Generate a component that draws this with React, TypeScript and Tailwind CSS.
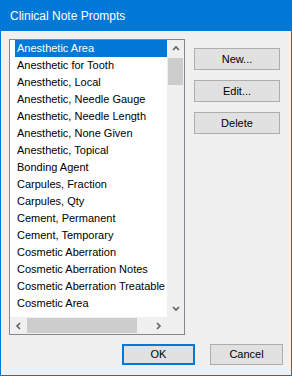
const items = [
  "Anesthetic Area",
  "Anesthetic for Tooth",
  "Anesthetic, Local",
  "Anesthetic, Needle Gauge",
  "Anesthetic, Needle Length",
  "Anesthetic, None Given",
  "Anesthetic, Topical",
  "Bonding Agent",
  "Carpules, Fraction",
  "Carpules, Qty",
  "Cement, Permanent",
  "Cement, Temporary",
  "Cosmetic Aberration",
  "Cosmetic Aberration Notes",
  "Cosmetic Aberration Treatable",
  "Cosmetic Area",
];

const Chevron = ({ dir }: { dir: "up" | "down" | "left" | "right" }) => {
  const pts = {
    up: "1,5 4,2 7,5",
    down: "1,2 4,5 7,2",
    left: "5,1 2,4 5,7",
    right: "2,1 5,4 2,7",
  }[dir];
  return (
    <svg width="8" height="8" viewBox="0 0 8 8">
      <polyline points={pts} fill="none" stroke="#606060" strokeWidth="1.6" />
    </svg>
  );
};

const Btn = ({ label, wide, primary }: { label: string; wide?: boolean; primary?: boolean }) => (
  <button
    className={
      (wide ? "w-[86px] h-[22px] " : "w-[73px] h-[21px] ") +
      (primary ? "border-2 border-[#0078d7] " : "border border-[#adadad] ") +
      "bg-[#e1e1e1] text-[11px] text-black leading-none flex items-center justify-center"
    }
  >
    {label}
  </button>
);

export default function App() {
  return (
    <div
      className="w-[292px] h-[376px] bg-[#0078d7] flex flex-col"
      style={{ fontFamily: "'Liberation Sans', Arial, sans-serif" }}
    >
      <div className="h-[31px] flex items-center pl-[10px] text-white text-[12px]">
        Clinical Note Prompts
      </div>
      <div className="flex-1 bg-[#f0f0f0] mx-[1px] mb-[1px] flex flex-col">
        <div className="flex pl-2 pt-2">
          <div className="w-[176px] h-[296px] border border-[#828790] bg-white flex flex-col">
            <div className="flex flex-1 min-h-0">
              <div className="flex-1 pl-[5px] overflow-hidden">
                {items.map((it, i) => (
                  <div
                    key={it}
                    className={
                      "h-[17px] flex items-center pl-[2px] text-[11px] whitespace-nowrap " +
                      (i === 0 ? "bg-[#0078d7] text-white" : "text-black")
                    }
                  >
                    {it}
                  </div>
                ))}
              </div>
              <div className="w-[17px] bg-[#f0f0f0] flex flex-col">
                <div className="h-[17px] flex items-center justify-center">
                  <Chevron dir="up" />
                </div>
                <div className="flex-1">
                  <div className="mt-[1px] mx-[1px] h-[27px] bg-[#cdcdcd]" />
                </div>
                <div className="h-[17px] flex items-center justify-center">
                  <Chevron dir="down" />
                </div>
              </div>
            </div>
            <div className="h-[17px] flex">
              <div className="flex-1 bg-[#f0f0f0] flex items-center">
                <div className="w-[17px] h-[17px] flex items-center justify-center">
                  <Chevron dir="left" />
                </div>
                <div className="flex-1 h-full py-[1px]">
                  <div className="w-[110px] h-full bg-[#cdcdcd]" />
                </div>
                <div className="w-[17px] h-[17px] flex items-center justify-center">
                  <Chevron dir="right" />
                </div>
              </div>
              <div className="w-[17px] bg-[#f0f0f0]" />
            </div>
          </div>
          <div className="ml-[9px] mt-[9px] flex flex-col gap-[10px]">
            <Btn label="New..." wide />
            <Btn label="Edit..." wide />
            <Btn label="Delete" wide />
          </div>
        </div>
        <div className="flex justify-end gap-[15px] pr-2 mt-[9px]">
          <Btn label="OK" primary />
          <Btn label="Cancel" />
        </div>
      </div>
    </div>
  );
}
